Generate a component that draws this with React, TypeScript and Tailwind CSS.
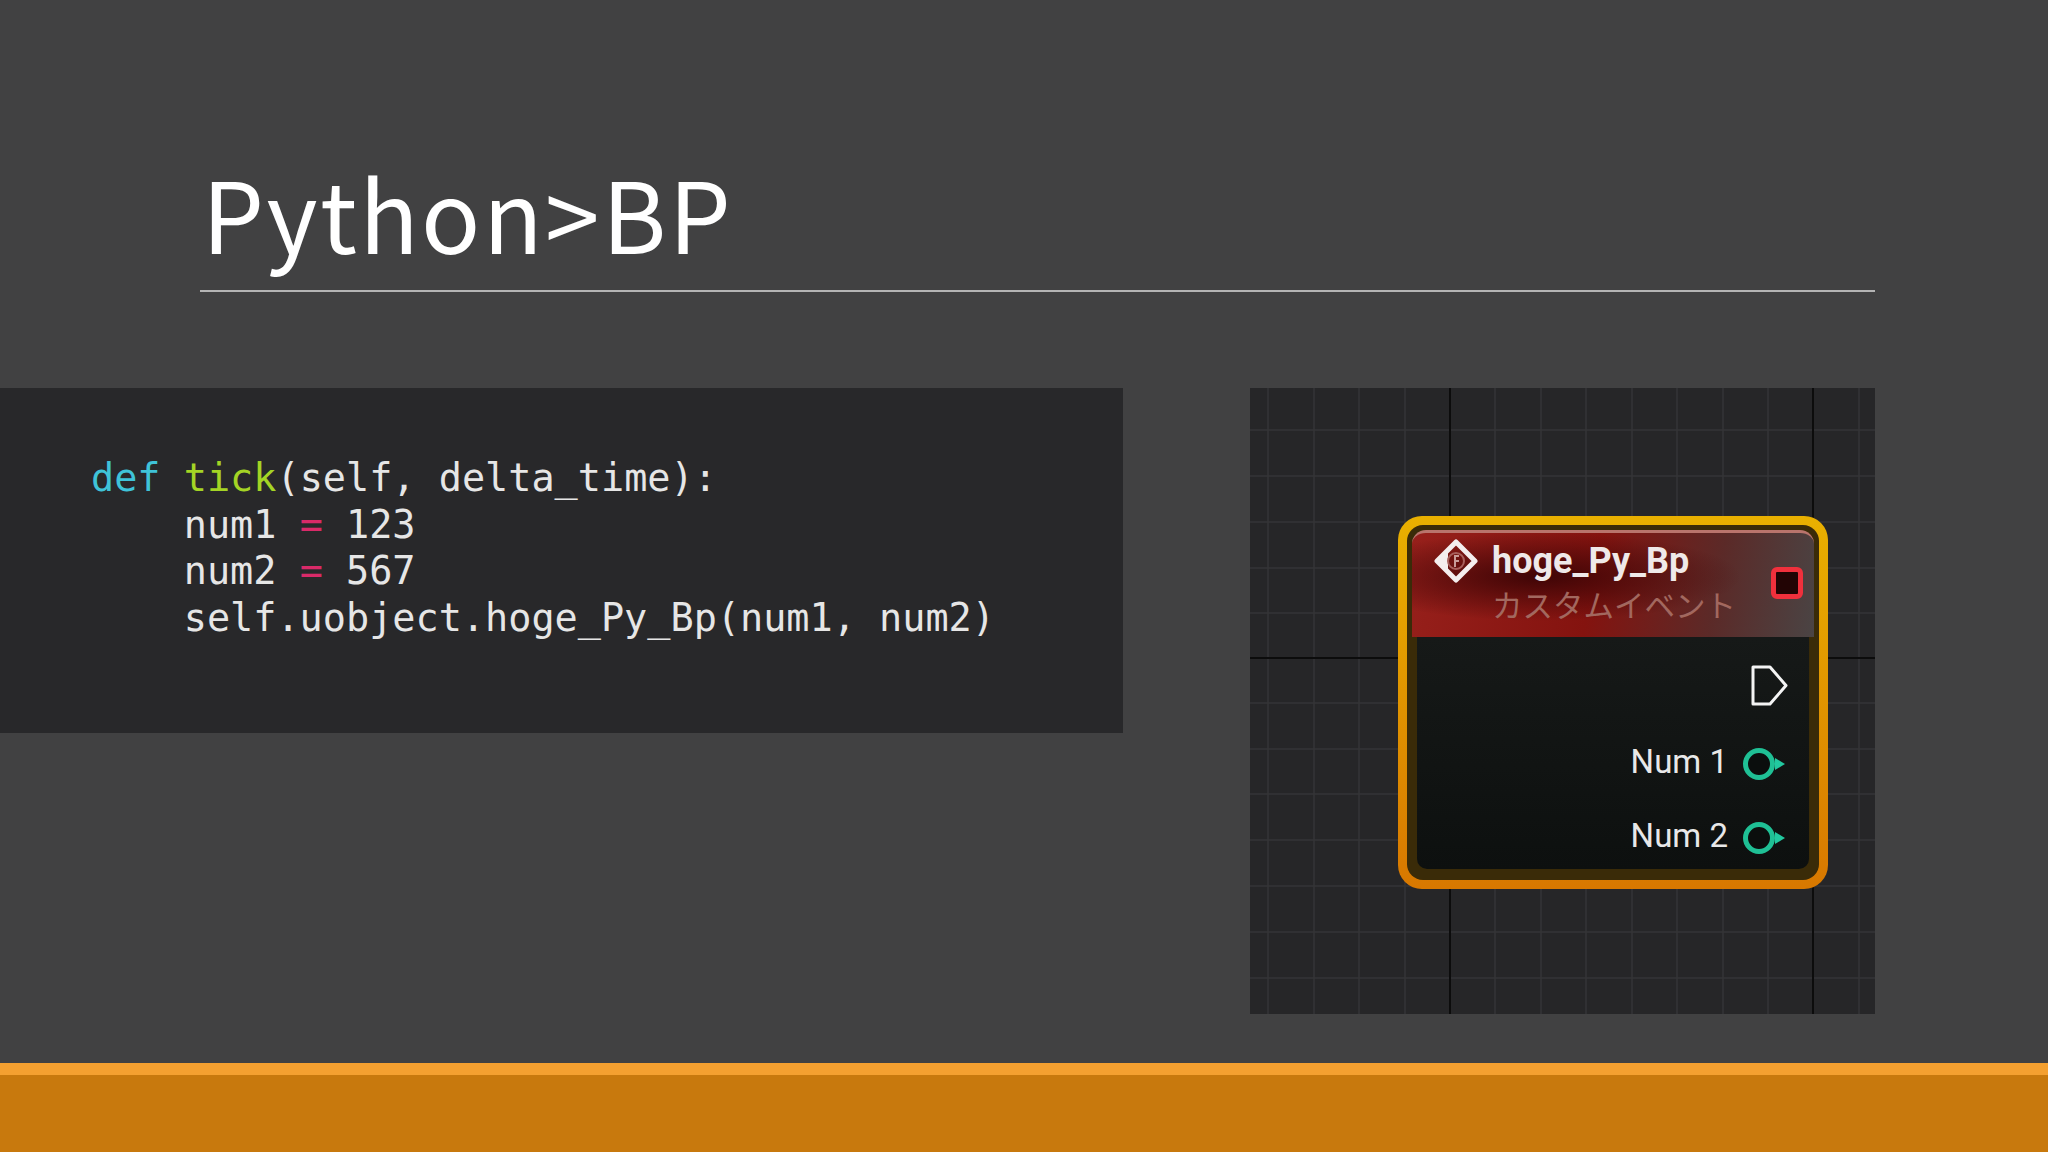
const verticals = [18, 64, 109, 155, 245, 291, 336, 382, 427, 473, 518, 609];
const horizontals = [42, 88, 134, 180, 225, 315, 361, 406, 452, 498, 544, 590];

// The blueprint graph behind the node
const BlueprintGrid = () => (
  <svg className="absolute inset-0" width="625" height="626" viewBox="0 0 625 626">
    {verticals.map((x) => (
      <line key={x} x1={x} y1="0" x2={x} y2="626" stroke="#353537" strokeWidth="1.5" />
    ))}
    {horizontals.map((y) => (
      <line key={y} x1="0" y1={y} x2="625" y2={y} stroke="#353537" strokeWidth="1.5" />
    ))}
    <line x1="200" y1="0" x2="200" y2="626" stroke="#0c0c0c" strokeWidth="2" />
    <line x1="563" y1="0" x2="563" y2="626" stroke="#0c0c0c" strokeWidth="2" />
    <line x1="0" y1="270" x2="625" y2="270" stroke="#0c0c0c" strokeWidth="2" />
  </svg>
);

const EventIcon = () => (
  <svg width="44" height="44" viewBox="0 0 44 44" fill="none">
    <path d="M22 3 L41 22 L22 41 L3 22 Z" stroke="#f4eeee" strokeWidth="5" strokeLinejoin="round" />
    <path d="M5 22 L14 13 L14 31 Z" fill="#f4eeee" />
    <circle cx="22" cy="22" r="8" stroke="#a8605c" strokeWidth="2" />
    <path d="M25 17 H21 V28 M21 22 H25" stroke="#c89c98" strokeWidth="2" />
  </svg>
);

const ExecPin = () => (
  <svg width="38" height="41" viewBox="0 0 38 41" fill="none">
    <path d="M2 2 H19 L35 20.5 L19 39 H2 Z" stroke="#f4f4f4" strokeWidth="3" strokeLinejoin="round" />
  </svg>
);

const DataPin = () => (
  <svg width="44" height="32" viewBox="0 0 44 32" fill="none">
    <circle cx="16" cy="16" r="13.5" stroke="#1fc095" strokeWidth="5" fill="#0b0e0d" />
    <path d="M32 10 L42 16 L32 22 Z" fill="#22c9a0" />
  </svg>
);

const PinRow = ({ label }: { label: string }) => (
  <div className="flex items-center justify-end gap-[15px] h-[32px]">
    <span className="pb-[5px] text-[33px] leading-none text-[#e8e8e8] font-['Roboto',sans-serif]">{label}</span>
    <DataPin />
  </div>
);

const BlueprintNode = () => (
  <div className="absolute left-[148px] top-[128px] w-[430px] h-[373px] rounded-[24px] p-[9px] bg-[linear-gradient(to_bottom,#e9b000,#d87800)]">
    <div className="h-full rounded-[16px] bg-[#3a2b08] px-[5px] pt-[5px] pb-[11px] flex flex-col">
      <div className="relative h-[107px] shrink-0 rounded-t-[14px] border-t-[3px] border-[#b9746c] bg-[radial-gradient(ellipse_at_32%_42%,#3f0506_0%,#4f080900_52%),linear-gradient(100deg,#97201b_0%,#84130f_45%,#5b2a28_75%,#4a4444_100%)]">
        <div className="absolute left-[22px] top-[6px]">
          <EventIcon />
        </div>
        <div className="pl-[80px] pt-[6px] text-[36px] leading-[44px] font-bold text-[#efe9e9] font-['Roboto',sans-serif]">
          hoge_Py_Bp
        </div>
        <div className="pl-[80px] pt-[3px] text-[30.5px] leading-[36px] text-[#a2685f] font-['Noto_Sans_CJK_JP',sans-serif]">
          カスタムイベント
        </div>
        <div className="absolute right-[11px] top-[34px] w-[32px] h-[32px] rounded-[6px] border-[5px] border-[#f0303c] bg-[#220404]" />
      </div>
      <div className="flex-1 mx-[5px] rounded-b-[10px] bg-[linear-gradient(to_bottom,#161918,#0d100f)] pr-[22px] pt-[28px] flex flex-col items-end">
        <div className="-mr-[2px]">
          <ExecPin />
        </div>
        <div className="mt-[42px] flex flex-col gap-[42px] self-stretch">
          <PinRow label="Num 1" />
          <PinRow label="Num 2" />
        </div>
      </div>
    </div>
  </div>
);

const Token = ({ color, children }: { color: string; children: string }) => (
  <span className={color}>{children}</span>
);

export default function App() {
  return (
    <div className="w-[2048px] h-[1152px] flex flex-col overflow-hidden bg-[#414142]">
      {/* Title */}
      <div className="ml-[200px] mr-[173px] h-[292px] flex items-end border-b-2 border-[#b4b4b4]">
        <h1 className="pl-[2px] pb-[9px] text-[98px] leading-[140px] tracking-[2.4px] font-normal text-white font-['Noto_Sans_CJK_JP',sans-serif]">
          Python&gt;BP
        </h1>
      </div>

      <div className="mt-[96px] flex items-start justify-between pr-[173px]">
        {/* Code panel */}
        <div className="w-[1123px] h-[345px] bg-[#28282a] pl-[91px] pt-[67px]">
          <pre className="text-[38.5px] leading-[46.6px] text-[#e6e6e6] font-['DejaVu_Sans_Mono',monospace]">
            <Token color="text-[#3fc3d8]">def</Token> <Token color="text-[#a4d425]">tick</Token>(self, delta_time):{'\n'}
            {'    '}num1 <Token color="text-[#d92a68]">=</Token> 123{'\n'}
            {'    '}num2 <Token color="text-[#d92a68]">=</Token> 567{'\n'}
            {'    '}self.uobject.hoge_Py_Bp(num1, num2)
          </pre>
        </div>

        {/* Blueprint screenshot */}
        <div className="relative w-[625px] h-[626px] bg-[#262628]">
          <BlueprintGrid />
          <BlueprintNode />
        </div>
      </div>

      {/* Footer band */}
      <div className="mt-auto h-[89px] border-t-[12px] border-[#f4a030] bg-[#c8790d]" />
    </div>
  );
}
